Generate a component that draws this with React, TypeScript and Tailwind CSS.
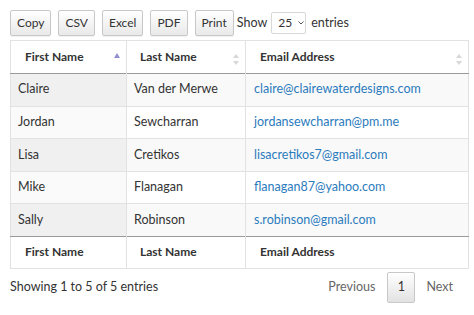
import React from "react";

const ROWS = [
  { first: "Claire", last: "Van der Merwe", email: "claire@clairewaterdesigns.com" },
  { first: "Jordan", last: "Sewcharran", email: "jordansewcharran@pm.me" },
  { first: "Lisa", last: "Cretikos", email: "lisacretikos7@gmail.com" },
  { first: "Mike", last: "Flanagan", email: "flanagan87@yahoo.com" },
  { first: "Sally", last: "Robinson", email: "s.robinson@gmail.com" },
];

const BUTTONS = ["Copy", "CSV", "Excel", "PDF", "Print"];

function SortBoth() {
  return (
    <svg width="6" height="11" viewBox="0 0 6 11" className="absolute right-[6px] top-[13px]">
      <path d="M3 0 L6 4 L0 4 Z" fill="#d8d8d8" />
      <path d="M3 11 L6 7 L0 7 Z" fill="#d8d8d8" />
    </svg>
  );
}

function SortAsc() {
  return (
    <svg width="6" height="5" viewBox="0 0 6 5" className="absolute right-[6px] top-[12px]">
      <path d="M3 0 L6 5 L0 5 Z" fill="#8f8fd0" />
    </svg>
  );
}

export default function App() {
  return (
    <div
      className="w-[474px] h-[315px] bg-white px-[10px] pt-[10px] text-[12.5px] text-[#333]"
      style={{ fontFamily: 'Lato, "Open Sans", sans-serif' }}
    >
      <div className="flex items-center h-[26px]">
        <div className="flex gap-[7px]">
          {BUTTONS.map((b) => (
            <button
              key={b}
              className="h-[26px] px-[6px] text-[12px] text-[#333] border border-[#c8c8c8] rounded-[2px] bg-gradient-to-b from-white to-[#e9e9e9] shadow-[0_1px_1px_rgba(0,0,0,0.06)]"
            >
              {b}
            </button>
          ))}
        </div>
        <span className="ml-[3px]">Show</span>
        <div className="ml-[4px] shrink-0 flex items-center gap-[6px] w-[35px] h-[22px] border border-[#d8d8d8] rounded-[2px] pl-[6px] text-[12px]">
          <span>25</span>
          <svg width="6" height="4" viewBox="0 0 6 4">
            <path d="M0.5 0.5 L3 3 L5.5 0.5" stroke="#555" strokeWidth="1" fill="none" />
          </svg>
        </div>
        <span className="ml-[5px]">entries</span>
      </div>

      <table className="mt-[4px] w-[458px] border-collapse table-fixed border border-[#e2e2e2]">
        <colgroup>
          <col className="w-[116px]" />
          <col className="w-[119px]" />
          <col className="w-[223px]" />
        </colgroup>
        <thead>
          <tr className="h-[33px] border-b border-[#9a9a9a] text-[12px]">
            <th className="relative text-left font-bold pl-[14px] border-r border-[#e2e2e2]">
              First Name
              <SortAsc />
            </th>
            <th className="relative text-left font-bold pl-[13px] border-r border-[#e2e2e2]">
              Last Name
              <SortBoth />
            </th>
            <th className="relative text-left font-bold pl-[14px]">
              Email Address
              <SortBoth />
            </th>
          </tr>
        </thead>
        <tbody>
          {ROWS.map((r, i) => {
            const odd = i % 2 === 0;
            return (
              <tr key={r.first} className={`h-[32.6px] border-t border-[#e2e2e2] ${odd ? "bg-[#f9f9f9]" : "bg-white"}`}>
                <td className={`pl-[7px] border-r border-[#e2e2e2] ${odd ? "bg-[#f0f0f0]" : "bg-[#fafafa]"}`}>{r.first}</td>
                <td className="pl-[7px] border-r border-[#e2e2e2]">{r.last}</td>
                <td className="pl-[8px] text-[#2b7bbd]">{r.email}</td>
              </tr>
            );
          })}
        </tbody>
        <tfoot>
          <tr className="h-[32px] border-t border-[#9a9a9a] text-[12px]">
            <th className="text-left font-bold pl-[14px] border-r border-[#e2e2e2]">First Name</th>
            <th className="text-left font-bold pl-[13px] border-r border-[#e2e2e2]">Last Name</th>
            <th className="text-left font-bold pl-[14px]">Email Address</th>
          </tr>
        </tfoot>
      </table>

      <div className="flex items-center justify-between mt-[3px] h-[31px]">
        <span>Showing 1 to 5 of 5 entries</span>
        <div className="flex items-center text-[#666]">
          <span className="pr-[12px]">Previous</span>
          <span className="flex items-center justify-center w-[28px] h-[31px] border border-[#c8c8c8] rounded-[2px] bg-gradient-to-b from-white to-[#e2e2e2] text-[#333]">
            1
          </span>
          <span className="pl-[11px] pr-[11px]">Next</span>
        </div>
      </div>
    </div>
  );
}
